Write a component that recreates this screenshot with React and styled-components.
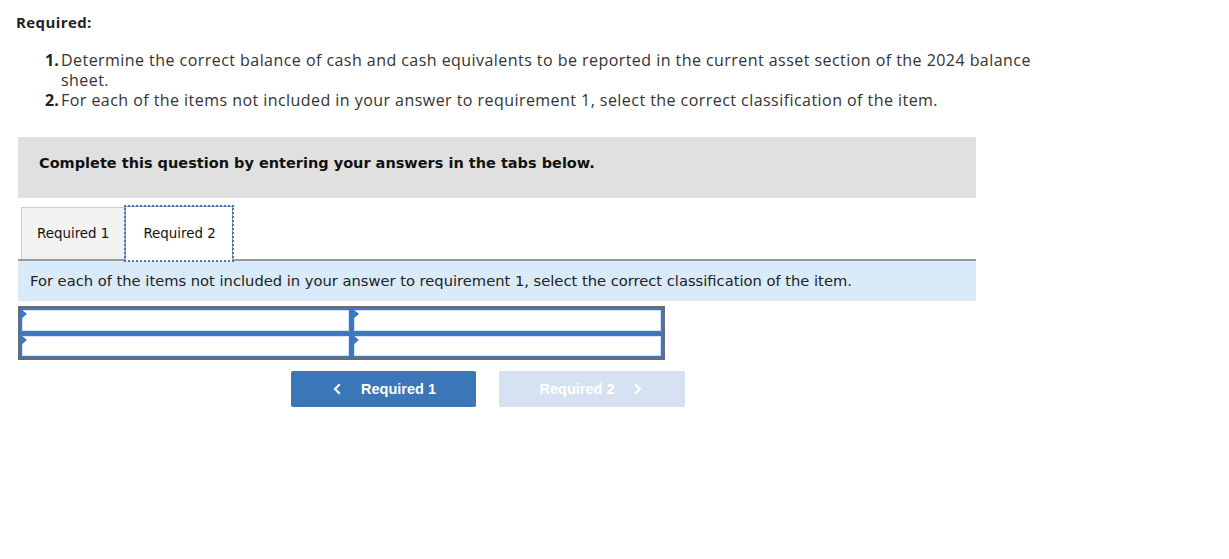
import React from "react";
import styled, { createGlobalStyle } from "styled-components";

const GlobalStyle = createGlobalStyle`
  body {
    margin: 0;
    background: #fff;
    font-family: "Open Sans", Arial, sans-serif;
    color: #222;
  }
`;

const Page = styled.div`
  padding: 12px 0 0 0;
  width: 976px;
`;

const Heading = styled.div`
  font-family: "Open Sans", Arial, sans-serif;
  font-weight: 700;
  font-size: 15px;
  letter-spacing: 0.4px;
  color: #222;
  padding-left: 16px;
  line-height: 20px;
`;

const List = styled.ol`
  margin: 18px 0 0 0;
  padding-left: 61px;
  list-style: none;
  counter-reset: req;
  width: 985px;
`;

const Item = styled.li`
  position: relative;
  font-size: 16px;
  letter-spacing: 0.45px;
  line-height: 20px;
  color: #333;
  counter-increment: req;
  &::before {
    content: counter(req) ".";
    position: absolute;
    left: -16px;
    font-weight: 700;
    letter-spacing: 0;
    color: #222;
  }
`;

const Banner = styled.div`
  margin: 27px 0 0 18px;
  height: 61px;
  box-sizing: border-box;
  background: #e0e0e0;
  display: flex;
  align-items: center;
  padding: 0 0 10px 21px;
  font-family: "DejaVu Sans", Verdana, sans-serif;
  font-weight: 700;
  font-size: 14.5px;
  color: #111;
`;

const TabBar = styled.div`
  margin: 8px 0 0 18px;
  display: flex;
  align-items: flex-end;
  padding-left: 3px;
  border-bottom: 2px solid #999;
  height: 53px;
`;

const Tab = styled.div`
  box-sizing: border-box;
  display: flex;
  align-items: center;
  justify-content: center;
  padding: ${(p) => (p.active ? "0 16px 2px 17px" : "0 15px")};
  font-family: "DejaVu Sans", Verdana, sans-serif;
  font-size: 13.4px;
  color: #111;
  background: ${(p) => (p.active ? "#fff" : "#f2f2f2")};
  border: 1px solid ${(p) => (p.active ? "#999" : "#ccc")};
  border-bottom: none;
  outline: ${(p) => (p.active ? "2px dotted #3f76bd" : "none")};
  outline-offset: -1px;
  margin-bottom: ${(p) => (p.active ? "-2px" : "0")};
  height: ${(p) => (p.active ? "55px" : "52px")};
`;

const Instruction = styled.div`
  margin-left: 18px;
  height: 40px;
  box-sizing: border-box;
  background: #d9eaf8;
  display: flex;
  align-items: center;
  padding: 0 0 2px 12px;
  font-family: "DejaVu Sans", Verdana, sans-serif;
  font-size: 14.7px;
  color: #222;
`;

const Grid = styled.table`
  margin: 5px 0 0 18px;
  width: 647px;
  border-collapse: collapse;
  border: 2px solid #6b6b6b;
`;

const Cell = styled.td`
  position: relative;
  padding: 0;
  height: ${(p) => p.h}px;
  width: ${(p) => p.w}px;
  border: 1px solid #6b6b6b;
`;

const Input = styled.div`
  box-sizing: border-box;
  height: ${(p) => p.h}px;
  border: 2px solid #4177bf;
  box-shadow: inset 0 0 0 1px #d4e2f4;
  background: #fff;
`;

const Flag = styled.span`
  position: absolute;
  left: 1px;
  top: 1px;
  width: 0;
  height: 0;
  border-top: 5px solid transparent;
  border-bottom: 5px solid transparent;
  border-left: 6px solid #3f76bd;
`;

const Nav = styled.div`
  display: flex;
  justify-content: center;
  gap: 23px;
  margin-top: 11px;
`;

const NavButton = styled.button`
  width: ${(p) => (p.disabled ? 186 : 185)}px;
  height: 36px;
  border: none;
  border-radius: 2px;
  background: ${(p) => (p.disabled ? "#d6e2f1" : "#3a76b8")};
  color: #fff;
  font-family: "Liberation Sans", Arial, sans-serif;
  font-weight: 700;
  font-size: 14.5px;
  display: flex;
  align-items: center;
  justify-content: center;
  gap: 18px;
  cursor: ${(p) => (p.disabled ? "default" : "pointer")};
  svg {
    width: 12px;
    height: 12px;
  }
`;

const Chevron = ({ dir }) => (
  <svg viewBox="0 0 12 12" fill="none" stroke="#fff" strokeWidth="2.2" strokeLinecap="square">
    {dir === "left" ? <polyline points="8,2 4,6 8,10" /> : <polyline points="4,2 8,6 4,10" />}
  </svg>
);

const rows = [25, 24];

export default function App() {
  return (
    <>
      <GlobalStyle />
      <Page>
        <Heading>Required:</Heading>
        <List>
          <Item>
            Determine the correct balance of cash and cash equivalents to be reported in the current asset section of the 2024 balance sheet.
          </Item>
          <Item>
            For each of the items not included in your answer to requirement 1, select the correct classification of the item.
          </Item>
        </List>
        <Banner>Complete this question by entering your answers in the tabs below.</Banner>
        <TabBar>
          <Tab>Required 1</Tab>
          <Tab active>Required 2</Tab>
        </TabBar>
        <Instruction>
          For each of the items not included in your answer to requirement 1, select the correct classification of the item.
        </Instruction>
        <Grid>
          <tbody>
            {rows.map((h, i) => (
              <tr key={i}>
                <Cell w={333} h={h}>
                  <Input h={h} />
                  <Flag />
                </Cell>
                <Cell w={312} h={h}>
                  <Input h={h} />
                  <Flag />
                </Cell>
              </tr>
            ))}
          </tbody>
        </Grid>
        <Nav>
          <NavButton>
            <Chevron dir="left" />
            Required 1
          </NavButton>
          <NavButton disabled>
            Required 2
            <Chevron dir="right" />
          </NavButton>
        </Nav>
      </Page>
    </>
  );
}
